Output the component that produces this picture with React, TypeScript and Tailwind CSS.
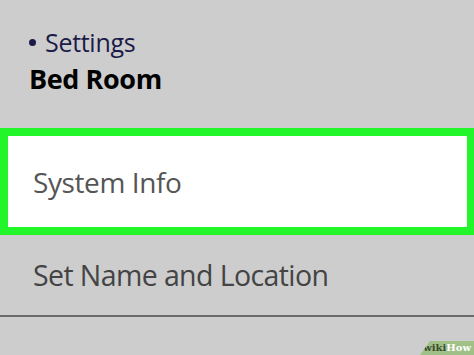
export default function App() {
  return (
    <div className="relative w-[474px] h-[355px] overflow-hidden bg-[#cdcdcd] font-['Open_Sans',sans-serif]">
      <div className="pt-[25px] pl-[29px]">
        <div className="flex items-center text-[25px] leading-[34px] text-[#1c1a48] tracking-[-0.3px]">
          <span className="mr-[9px] w-[7px] h-[7px] rounded-full bg-[#1c1a48]" />
          <span>Settings</span>
        </div>
        <div className="mt-[3px] text-[27px] leading-[34px] font-bold text-black tracking-[-0.4px]">Bed Room</div>
      </div>
      <div className="mt-[32px] h-[107px] border-[8px] border-r-[7px] border-[#22f52a] bg-white flex items-center pl-[25px]">
        <span className="text-[28px] text-[#555555] tracking-[-0.4px]">System Info</span>
      </div>
      <div className="h-[82px] flex items-center pl-[33px] border-b-[2px] border-[#6a6a6a]">
        <span className="text-[28.5px] text-[#444444] tracking-[-0.6px]">Set Name and Location</span>
      </div>
      <div className="absolute right-0 bottom-0 h-[14px] w-[54px] bg-[#9fc087] [clip-path:polygon(10px_0,100%_0,100%_100%,0_100%)] flex items-center justify-end pr-[3px] font-['DejaVu_Serif',serif] text-[10px] font-bold leading-none">
        <span className="text-[#3b4a2c]">wiki</span>
        <span className="text-white">How</span>
      </div>
    </div>
  );
}
